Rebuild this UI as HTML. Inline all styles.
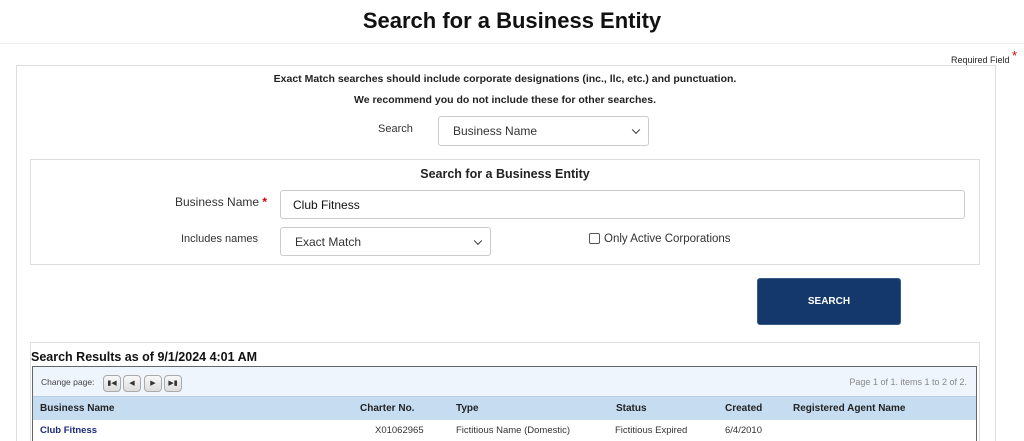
<!DOCTYPE html>
<html style="height:441px;overflow:hidden"><head><style>
body{margin:0;width:1024px;height:441px;overflow:hidden;background:#fff;font-family:"Liberation Sans",Arial,sans-serif;position:relative;color:#222}
.a{position:absolute}
h1{position:absolute;left:0;width:1024px;top:8px;margin:0;text-align:center;font-size:22px;font-weight:bold;color:#111}
.sel,.inp{position:absolute;border:1px solid #ccc;border-radius:3px;background:#fff;font-size:12px;color:#333;box-sizing:border-box;padding-left:14px;display:flex;align-items:center}
.chev{position:absolute;right:9px;top:50%;width:5px;height:5px;border-right:1.5px solid #333;border-bottom:1.5px solid #333;transform:translateY(-70%) rotate(45deg)}
.b{font-weight:bold}
.pb{position:absolute;top:375px;width:18px;height:17px;border:1px solid #aaa;border-radius:4px;background:linear-gradient(#f8f8f8,#ddd);box-sizing:border-box;font-size:7px;text-align:center;line-height:15px;color:#333}
</style></head><body>
<h1>Search for a Business Entity</h1>
<div class="a" style="left:0;top:43px;width:1024px;height:1px;background:#eee"></div>
<div class="a" style="left:951px;top:51px;font-size:9px;color:#222">Required Field <span style="color:#c00;font-size:13px;position:relative;top:-3px">*</span></div>
<div class="a" style="left:16px;top:65px;width:978px;height:390px;border:1px solid #ddd"></div>
<div class="a b" style="left:0;width:1010px;top:73px;text-align:center;font-size:10.5px">Exact Match searches should include corporate designations (inc., llc, etc.) and punctuation.</div>
<div class="a b" style="left:0;width:1010px;top:94px;text-align:center;font-size:10.5px">We recommend you do not include these for other searches.</div>
<div class="a" style="left:378px;top:123px;font-size:11px;color:#333">Search</div>
<div class="sel" style="left:438px;top:116px;width:211px;height:30px">Business Name<span class="chev"></span></div>
<div class="a" style="left:30px;top:159px;width:948px;height:104px;border:1px solid #ddd"></div>
<div class="a b" style="left:30px;width:950px;top:167px;text-align:center;font-size:12.5px">Search for a Business Entity</div>
<div class="a" style="left:175px;top:195px;font-size:12px;color:#333">Business Name <span style="color:#c00;font-weight:bold">*</span></div>
<div class="inp" style="left:280px;top:190px;width:685px;height:29px;color:#111;padding-left:12px">Club Fitness</div>
<div class="a" style="left:181px;top:233px;font-size:11px;color:#333">Includes names</div>
<div class="sel" style="left:280px;top:227px;width:211px;height:29px">Exact Match<span class="chev"></span></div>
<div class="a" style="left:589px;top:233px;width:9px;height:9px;border:1px solid #555;border-radius:2px"></div>
<div class="a" style="left:604px;top:233px;font-size:11.5px;color:#333">Only Active Corporations</div>
<div class="a b" style="left:757px;top:278px;width:144px;height:47px;background:#14386b;border-radius:3px;border:1px solid #3a5a8a;box-sizing:border-box;color:#fff;font-size:10px;text-align:center;line-height:45px">SEARCH</div>
<div class="a" style="left:30px;top:342px;width:948px;height:110px;border:1px solid #ddd"></div>
<div class="a b" style="left:31px;top:350px;font-size:12.5px;color:#111">Search Results as of 9/1/2024 4:01 AM</div>
<div class="a" style="left:32px;top:366px;width:943px;height:80px;border:1px solid #666;border-bottom:none;background:#fff"></div>
<div class="a" style="left:33px;top:367px;width:943px;height:29px;background:#eef5fc"></div>
<div class="a" style="left:41px;top:377px;font-size:8.5px;color:#444">Change page:</div>
<div class="pb" style="left:103px">▮◀</div><div class="pb" style="left:123px">◀</div><div class="pb" style="left:144px">▶</div><div class="pb" style="left:164px">▶▮</div>
<div class="a" style="left:800px;top:377px;width:167px;text-align:right;font-size:9px;color:#888">Page 1 of 1. items 1 to 2 of 2.</div>
<div class="a" style="left:33px;top:396px;width:943px;height:23px;background:#c6dcf1;border-top:1px solid #b9cde0"></div>
<div class="a b" style="top:403px;left:40px;font-size:10px">Business Name</div>
<div class="a b" style="top:403px;left:360px;font-size:10px">Charter No.</div>
<div class="a b" style="top:403px;left:456px;font-size:10px">Type</div>
<div class="a b" style="top:403px;left:616px;font-size:10px">Status</div>
<div class="a b" style="top:403px;left:725px;font-size:10px">Created</div>
<div class="a b" style="top:403px;left:793px;font-size:10px">Registered Agent Name</div>
<div class="a b" style="top:425px;left:40px;font-size:9.5px;color:#1b2a7a">Club Fitness</div>
<div class="a" style="top:425px;left:375px;font-size:9.5px;color:#333">X01062965</div>
<div class="a" style="top:425px;left:456px;font-size:9.5px;color:#333">Fictitious Name (Domestic)</div>
<div class="a" style="top:425px;left:615px;font-size:9.5px;color:#333">Fictitious Expired</div>
<div class="a" style="top:425px;left:725px;font-size:9.5px;color:#333">6/4/2010</div>
</body></html>
